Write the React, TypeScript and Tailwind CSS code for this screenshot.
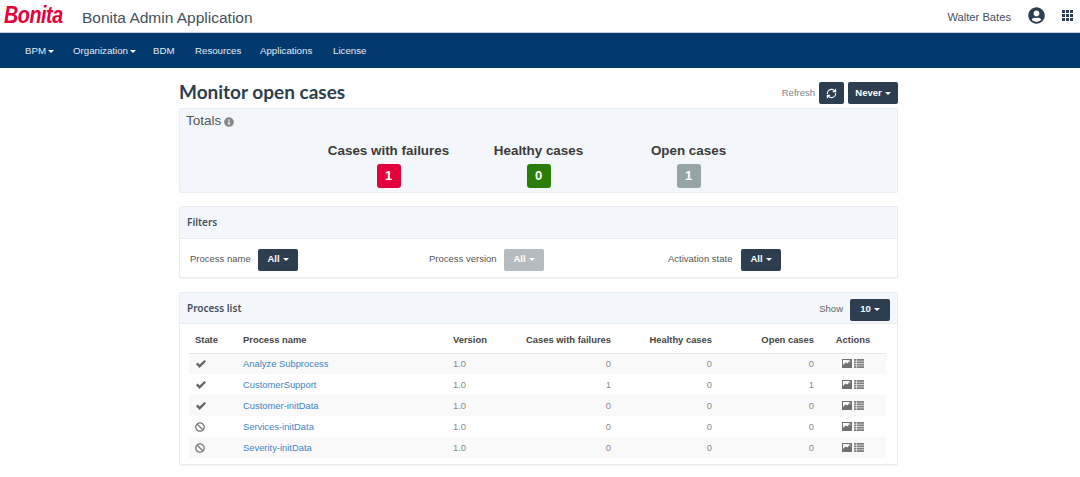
import { FaBan, FaInfoCircle, FaUserCircle } from "react-icons/fa";
import { RefreshCw } from "lucide-react";

const navItems = [
  { label: "BPM", caret: true, width: "w-[48px]" },
  { label: "Organization", caret: true, width: "w-[80px]" },
  { label: "BDM", caret: false, width: "w-[42px]" },
  { label: "Resources", caret: false, width: "w-[65px]" },
  { label: "Applications", caret: false, width: "w-[73px]" },
  { label: "License", caret: false, width: "w-[50px]" },
];

const totals = [
  { label: "Cases with failures", value: 1, color: "bg-[#e4003a]" },
  { label: "Healthy cases", value: 0, color: "bg-[#2a7d08]" },
  { label: "Open cases", value: 1, color: "bg-[#95a5a6]" },
];

const processes = [
  { name: "Analyze Subprocess", enabled: true, failures: 0, healthy: 0, open: 0 },
  { name: "CustomerSupport", enabled: true, failures: 1, healthy: 0, open: 1 },
  { name: "Customer-initData", enabled: true, failures: 0, healthy: 0, open: 0 },
  { name: "Services-initData", enabled: false, failures: 0, healthy: 0, open: 0 },
  { name: "Severity-initData", enabled: false, failures: 0, healthy: 0, open: 0 },
];

function Caret({ className = "ml-[2px]" }: { className?: string }) {
  return <span className={`inline-block w-0 h-0 align-middle border-x-[3px] border-x-transparent border-t-[3px] border-t-white ${className}`}></span>;
}

function DarkButton({ label, disabled, className = "" }: { label: string; disabled?: boolean; className?: string }) {
  return (
    <div className={`h-[22px] flex items-center justify-center rounded-[2px] text-[9.5px] font-bold text-white ${disabled ? "bg-[#b4bcbf]" : "bg-[#2c3e50]"} ${className}`}>
      {label}
      <Caret className="ml-[3px]" />
    </div>
  );
}

function AppGrid() {
  return (
    <svg width="11" height="11" viewBox="0 0 11 11" fill="#2c3e50">
      {[0, 4, 8].map((y) => [0, 4, 8].map((x) => <rect key={`${x}-${y}`} x={x} y={y} width="3" height="3" />))}
    </svg>
  );
}

function CheckIcon() {
  return (
    <svg width="10" height="8" viewBox="0 0 10 8" fill="#666">
      <path d="M0 4.2 1.6 2.6 3.6 4.6 8.4 0 10 1.6 3.6 8Z" />
    </svg>
  );
}

function PictureIcon() {
  return (
    <svg width="10" height="9" viewBox="0 0 10 9">
      <rect width="10" height="9" fill="#707070" />
      <path d="M1 1H8L5.5 4.5 3.5 3.5 1 6Z" fill="#fafafa" />
      <rect x="7" y="1.5" width="2" height="2" fill="#9a9a9a" />
    </svg>
  );
}

function ListIcon() {
  return (
    <svg width="10" height="9" viewBox="0 0 10 9" fill="#808080">
      {[0, 2.4, 4.8, 7.2].map((y) => (
        <g key={y}>
          <rect x="0" y={y} width="2" height="1.8" />
          <rect x="2.6" y={y} width="7.4" height="1.8" />
        </g>
      ))}
    </svg>
  );
}

export default function App() {
  return (
    <div className="w-[1080px] h-[477px] overflow-hidden bg-white font-['Liberation_Sans',sans-serif] text-[#333]">
      {/* top bar */}
      <header className="h-[33px] flex items-center border-b border-[#c9d0d8] bg-white">
        <span className="w-[82px] pl-[4px] shrink-0">
          <span className="inline-block origin-left scale-x-[0.82] text-[#e4003a] text-[24px] leading-none italic font-bold tracking-[-0.5px]">Bonita</span>
        </span>
        <span className="pt-[4px] text-[15.5px] text-[#44505c]">Bonita Admin Application</span>
        <div className="ml-auto flex items-center text-[#2c3e50]">
          <span className="pt-[2px] text-[11.2px] text-[#44505c]">Walter Bates</span>
          <FaUserCircle className="ml-[17px] text-[17px] text-[#2c3e50]" />
          <span className="ml-[17px] mr-[7px] flex"><AppGrid /></span>
        </div>
      </header>
      <nav className="h-[35px] pl-[25px] pt-[1px] flex items-center bg-[#023a70] text-[9.7px] text-[#e4ebf2]">
        {navItems.map((item) => (
          <span key={item.label} className={`shrink-0 ${item.width}`}>
            {item.label}
            {item.caret && <Caret />}
          </span>
        ))}
      </nav>

      <main className="w-[719px] ml-[179px]">
        <div className="h-[40px] flex items-end pb-[5px]">
          <h1 className="mb-[2px] text-[19px] leading-none font-bold text-[#2c3e50] font-['Lato',sans-serif]">Monitor open cases</h1>
          <div className="ml-auto flex items-center mb-[-1px]">
            <span className="mr-[4px] text-[9.5px] text-[#7b8489]">Refresh</span>
            <div className="w-[25px] h-[22px] flex items-center justify-center rounded-[2px] bg-[#2c3e50] text-white">
              <RefreshCw size={11} strokeWidth={2.5} />
            </div>
            <DarkButton label="Never" className="w-[50px] ml-[4px]" />
          </div>
        </div>

        {/* totals */}
        <section className="h-[85px] rounded-[2px] border border-[#e9edf0] bg-[#f3f6fa]">
          <div className="h-[25px] pl-[6px] flex items-center gap-[3px] text-[13.5px] text-[#555]">
            Totals
            <FaInfoCircle className="text-[10px] text-[#888]" />
          </div>
          <div className="flex justify-center">
            {totals.map((t) => (
              <div key={t.label} className="w-[150px] flex flex-col items-center">
                <span className="mt-[9px] text-[13.4px] leading-[15px] font-bold text-[#3b3b3b]">{t.label}</span>
                <span className={`mt-[6px] w-[24px] h-[24px] flex items-center justify-center rounded-[3px] text-[13px] font-bold text-white ${t.color}`}>{t.value}</span>
              </div>
            ))}
          </div>
        </section>

        {/* filters */}
        <section className="mt-[13px] h-[72px] rounded-[2px] border border-[#e9edf0] bg-white shadow-[0_1px_1px_rgba(0,0,0,0.05)]">
          <div className="h-[32px] pl-[7px] flex items-center bg-[#f3f6fa] border-b border-[#e9edf0] text-[10px] font-semibold text-[#44505c] font-['Noto_Sans',sans-serif]">Filters</div>
          <div className="grid grid-cols-3 h-[38px] pt-[3px] items-center text-[9.5px] text-[#555]">
            <div className="pl-[10px] flex items-center">
              <span className="w-[68px]">Process name</span>
              <DarkButton label="All" className="w-[40px]" />
            </div>
            <div className="pl-[10px] flex items-center">
              <span className="w-[75px]">Process version</span>
              <DarkButton label="All" disabled className="w-[40px]" />
            </div>
            <div className="pl-[10px] flex items-center">
              <span className="w-[73px]">Activation state</span>
              <DarkButton label="All" className="w-[40px]" />
            </div>
          </div>
        </section>

        {/* process list */}
        <section className="mt-[14px] h-[173px] rounded-[2px] border border-[#e9edf0] bg-white shadow-[0_1px_1px_rgba(0,0,0,0.05)]">
          <div className="h-[31px] pl-[7px] pr-[7px] flex items-center bg-[#f3f6fa] border-b border-[#e9edf0]">
            <span className="text-[10px] font-semibold text-[#44505c] font-['Noto_Sans',sans-serif]">Process list</span>
            <span className="ml-auto pt-[2px] text-[9.5px] text-[#666]">Show</span>
            <DarkButton label="10" className="w-[40px] ml-[7px] mt-[3px]" />
          </div>
          <div className="px-[9px]">
            <table className="w-[697px] table-fixed text-[9.4px]">
              <colgroup>
                <col className="w-[48px]" />
                <col className="w-[210px]" />
                <col className="w-[60px]" />
                <col className="w-[110px]" />
                <col className="w-[101px]" />
                <col className="w-[102px]" />
                <col className="w-[66px]" />
              </colgroup>
              <thead>
                <tr className="h-[29px] border-b border-[#e6e6e6] font-bold text-[#444]">
                  <th className="pl-[6px] pt-[4px] text-left">State</th>
                  <th className="pl-[6px] pt-[4px] text-left">Process name</th>
                  <th className="pl-[6px] pt-[4px] text-left">Version</th>
                  <th className="pr-[6px] pt-[4px] text-right">Cases with failures</th>
                  <th className="pr-[6px] pt-[4px] text-right">Healthy cases</th>
                  <th className="pr-[6px] pt-[4px] text-right">Open cases</th>
                  <th className="pt-[4px] text-center">Actions</th>
                </tr>
              </thead>
              <tbody className="text-[#8a8a8a]">
                {processes.map((p, i) => (
                  <tr key={p.name} className={`h-[21px] ${i % 2 === 0 ? "bg-[#f9f9f9]" : "bg-white"}`}>
                    <td className={p.enabled ? "pl-[7px]" : "pl-[6px]"}>
                      {p.enabled ? <CheckIcon /> : <FaBan className="text-[10px] text-[#777]" />}
                    </td>
                    <td className="pl-[6px] pt-[1px] text-[#3f84c5]">{p.name}</td>
                    <td className="pl-[6px] pt-[1px]">1.0</td>
                    <td className="pr-[6px] pt-[1px] text-right">{p.failures}</td>
                    <td className="pr-[6px] pt-[1px] text-right">{p.healthy}</td>
                    <td className="pr-[6px] pt-[1px] text-right">{p.open}</td>
                    <td>
                      <div className="flex items-center justify-center gap-[2px]">
                        <PictureIcon />
                        <ListIcon />
                      </div>
                    </td>
                  </tr>
                ))}
              </tbody>
            </table>
          </div>
        </section>
      </main>
    </div>
  );
}
